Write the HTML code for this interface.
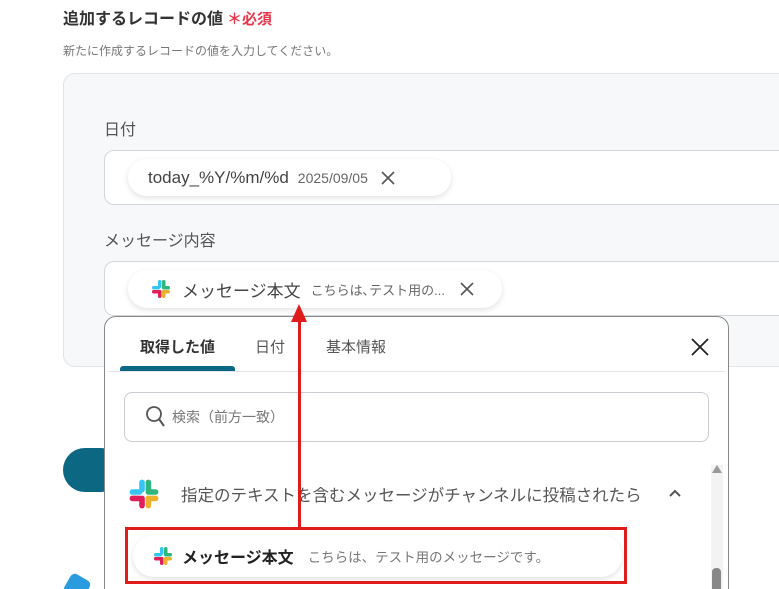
<!DOCTYPE html>
<html><head><meta charset="utf-8"><style>
*{box-sizing:border-box;margin:0;padding:0}
html,body{width:779px;height:589px;overflow:hidden}
body{background:#fff;font-family:"Liberation Sans","Noto Sans CJK JP",sans-serif;position:relative;color:#333}
.a{position:absolute}
.chip{position:absolute;background:#fff;border-radius:19px;box-shadow:0 2px 6px rgba(0,0,0,.12);display:flex;align-items:center}
</style></head><body>
<div class="a" style="left:63px;top:5px;font-size:16px;font-weight:bold;color:#333">追加するレコードの値<span style="color:#e8374a;font-size:15px;margin-left:4px">＊必須</span></div>
<div class="a" style="left:63px;top:42px;font-size:12px;color:#777">新たに作成するレコードの値を入力してください。</div>
<div class="a" style="left:63px;top:73px;width:740px;height:294px;background:#f7f8f9;border:1px solid #e2e4e7;border-radius:12px"></div>
<div class="a" style="left:104px;top:116px;font-size:16px;color:#555">日付</div>
<div class="a" style="left:104px;top:150px;width:700px;height:55px;background:#fff;border:1px solid #d3d7dc;border-radius:10px"></div>
<div class="chip" style="left:128px;top:159px;width:323px;height:37px;padding-left:20px">
<span style="font-size:17px;color:#444">today_%Y/%m/%d</span><span style="font-size:14px;color:#666;margin-left:9px">2025/09/05</span>
<svg style="margin-left:12px" width="16" height="16" viewBox="0 0 16 16"><path d="M2 2L14 14M14 2L2 14" stroke="#555" stroke-width="1.6"/></svg></div>
<div class="a" style="left:104px;top:227px;font-size:16px;color:#555">メッセージ内容</div>
<div class="a" style="left:104px;top:261px;width:700px;height:55px;background:#fff;border:1px solid #d3d7dc;border-radius:10px"></div>
<div class="chip" style="left:128px;top:270px;width:374px;height:38px;padding-left:23px">
<svg width="20" height="20" viewBox="0 0 20 20"><rect x="7" y="1" width="3.5" height="8" rx="1.7" fill="#36c5f0"/><rect x="1" y="7" width="8" height="3.5" rx="1.7" fill="#36c5f0"/><rect x="11" y="1" width="3.5" height="8" rx="1.7" fill="#2eb67d"/><rect x="11" y="7" width="8" height="3.5" rx="1.7" fill="#2eb67d"/><rect x="1" y="11" width="8" height="3.5" rx="1.7" fill="#e01e5a"/><rect x="7" y="11" width="3.5" height="8" rx="1.7" fill="#e01e5a"/><rect x="11" y="11" width="8" height="3.5" rx="1.7" fill="#ecb22e"/><rect x="11" y="11" width="3.5" height="8" rx="1.7" fill="#ecb22e"/></svg>
<span style="font-size:17px;color:#444;margin-left:11px">メッセージ本文</span><span style="font-size:13px;color:#666;margin-left:10px">こちらは､テスト用の...</span>
<svg style="margin-left:14px" width="16" height="16" viewBox="0 0 16 16"><path d="M2 2L14 14M14 2L2 14" stroke="#555" stroke-width="1.6"/></svg></div>
<div class="a" style="left:63px;top:448px;width:60px;height:44px;background:#0b6782;border-radius:22px"></div>
<div class="a" style="left:66px;top:576px;width:22px;height:22px;background:#2b9be0;border-radius:5px;transform:rotate(30deg)"></div>
<div class="a" style="left:104px;top:316px;width:625px;height:290px;background:#fff;border:1px solid #888;border-radius:12px"></div>
<div class="a" style="left:140px;top:336px;font-size:15px;color:#333;font-weight:bold">取得した値</div>
<div class="a" style="left:255px;top:336px;font-size:15px;color:#555">日付</div>
<div class="a" style="left:326px;top:336px;font-size:15px;color:#555">基本情報</div>
<svg class="a" style="left:690px;top:337px" width="20" height="20" viewBox="0 0 20 20"><path d="M2 2L18 18M18 2L2 18" stroke="#222" stroke-width="1.8"/></svg>
<div class="a" style="left:120px;top:366px;width:115px;height:5px;background:#0b6782;border-radius:3px 3px 0 0"></div>
<div class="a" style="left:108px;top:371px;width:617px;height:1px;background:#e3e5e8"></div>
<div class="a" style="left:124px;top:392px;width:585px;height:50px;border:1px solid #c9cdd2;border-radius:8px"></div>
<svg class="a" style="left:145px;top:405px" width="22" height="24" viewBox="0 0 22 24"><circle cx="9" cy="9" r="7" fill="none" stroke="#555" stroke-width="1.8"/><line x1="14" y1="14" x2="19" y2="21" stroke="#555" stroke-width="2"/></svg>
<div class="a" style="left:172px;top:407px;font-size:14px;color:#777">検索（前方一致）</div>
<div class="a" style="left:711px;top:465px;width:12px;height:124px;background:#f3f3f3"></div>
<div class="a" style="left:712px;top:465px;width:0;height:0;border-left:5px solid transparent;border-right:5px solid transparent;border-bottom:8px solid #999"></div>
<div class="a" style="left:712px;top:568px;width:9px;height:30px;background:#888;border-radius:4px"></div>
<svg class="a" style="left:128px;top:478px" width="32" height="32" viewBox="0 0 20 20"><rect x="7" y="1" width="3.5" height="8" rx="1.7" fill="#36c5f0"/><rect x="1" y="7" width="8" height="3.5" rx="1.7" fill="#36c5f0"/><rect x="11" y="1" width="3.5" height="8" rx="1.7" fill="#2eb67d"/><rect x="11" y="7" width="8" height="3.5" rx="1.7" fill="#2eb67d"/><rect x="1" y="11" width="8" height="3.5" rx="1.7" fill="#e01e5a"/><rect x="7" y="11" width="3.5" height="8" rx="1.7" fill="#e01e5a"/><rect x="11" y="11" width="8" height="3.5" rx="1.7" fill="#ecb22e"/><rect x="11" y="11" width="3.5" height="8" rx="1.7" fill="#ecb22e"/></svg>
<div class="a" style="left:181px;top:482px;font-size:16.5px;color:#555">指定のテキストを含むメッセージがチャンネルに投稿されたら</div>
<svg class="a" style="left:668px;top:488px" width="14" height="10" viewBox="0 0 14 10"><path d="M2 8L7 3L12 8" fill="none" stroke="#555" stroke-width="2"/></svg>
<div class="chip" style="left:133px;top:535px;width:489px;height:42px;padding-left:20px;border-radius:21px">
<svg width="20" height="20" viewBox="0 0 20 20"><rect x="7" y="1" width="3.5" height="8" rx="1.7" fill="#36c5f0"/><rect x="1" y="7" width="8" height="3.5" rx="1.7" fill="#36c5f0"/><rect x="11" y="1" width="3.5" height="8" rx="1.7" fill="#2eb67d"/><rect x="11" y="7" width="8" height="3.5" rx="1.7" fill="#2eb67d"/><rect x="1" y="11" width="8" height="3.5" rx="1.7" fill="#e01e5a"/><rect x="7" y="11" width="3.5" height="8" rx="1.7" fill="#e01e5a"/><rect x="11" y="11" width="8" height="3.5" rx="1.7" fill="#ecb22e"/><rect x="11" y="11" width="3.5" height="8" rx="1.7" fill="#ecb22e"/></svg>
<span style="font-size:16px;color:#222;font-weight:bold;margin-left:9px">メッセージ本文</span><span style="font-size:13.5px;color:#777;margin-left:14px">こちらは、テスト用のメッセージです。</span></div>
<div class="a" style="left:125px;top:527px;width:502px;height:57px;border:3px solid #e01b1b"></div>
<div class="a" style="left:298px;top:320px;width:3px;height:208px;background:#e01b1b"></div>
<div class="a" style="left:291px;top:304px;width:0;height:0;border-left:8.5px solid transparent;border-right:8.5px solid transparent;border-bottom:18px solid #e01b1b"></div>
</body></html>
